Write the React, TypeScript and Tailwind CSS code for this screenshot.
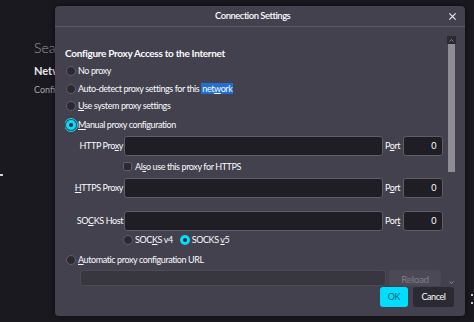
import React from 'react';

const Radio = ({ checked = false, focus = false }: { checked?: boolean; focus?: boolean }) => {
  if (!checked) {
    return <span className="block h-[10px] w-[10px] shrink-0 rounded-full border border-[#5f5e69] bg-[#2b2a33]" />;
  }
  const dot = (
    <span className="flex h-[10px] w-[10px] shrink-0 items-center justify-center rounded-full bg-[#00ddff]">
      <span className="h-[4px] w-[4px] rounded-full bg-[#2b2a33]" />
    </span>
  );
  if (!focus) return dot;
  return (
    <span className="-mx-[2px] flex h-[14px] w-[14px] shrink-0 items-center justify-center rounded-full border border-[#00ddff]">
      {dot}
    </span>
  );
};

const Input = ({ className = '', value }: { className?: string; value?: string }) => (
  <div
    className={`flex h-full items-center justify-end rounded-[3px] border border-[#5e5d68] bg-[#1f1e25] pr-[6px] text-[#fbfbfe] ${className}`}
  >
    {value}
  </div>
);

const ProxyRow = ({ label, port, className = '' }: { label: React.ReactNode; port: React.ReactNode; className?: string }) => (
  <div className={`flex h-[20px] items-center ${className}`}>
    <span className="w-[58px] text-right">{label}</span>
    <Input className="ml-[1px] w-[259px]" />
    <span className="ml-[2px] w-[16px]">{port}</span>
    <Input className="ml-[2px] w-[40px]" value="0" />
  </div>
);

export default function App() {
  return (
    <div className="relative h-[322px] w-[474px] overflow-hidden bg-[#1a1920] font-['Lato',sans-serif] text-[9px] leading-[12px] tracking-[-0.4px] text-[#fbfbfe]">
      {/* page behind the modal, clipped where the dialog covers it */}
      <div className="ml-[34px] flex w-[21px] flex-col overflow-hidden whitespace-nowrap pt-[38px] tracking-normal">
        <div className="h-[20px] text-[14px] font-light leading-[20px] text-[#9e9da7]">Search</div>
        <div className="mt-[6px] text-[11px] font-bold leading-[14px] text-[#e8e8ee]">Network</div>
        <div className="mt-[6px] text-[9px] text-[#a6a5ae]">Configure</div>
      </div>
      <div className="absolute left-0 top-[174px] h-[2px] w-[3px] bg-[#d0d0d6]" />
      <div className="absolute right-[1px] top-[294px] flex flex-col gap-[6px]">
        <span className="h-[2px] w-[2px] bg-[#c8c8ce]" />
        <span className="h-[2px] w-[2px] bg-[#c8c8ce]" />
      </div>

      {/* dialog */}
      <div className="absolute left-[55px] top-[6px] flex h-[310px] w-[410px] flex-col rounded-[4px] bg-[#42414d] shadow-[0_0_6px_rgba(0,0,0,0.6)]">
        <div className="flex h-[21px] shrink-0 items-center justify-between border-b border-[#5c5b67] pl-[160px] pr-[8px]">
          <span className="text-[9.5px] font-semibold tracking-[-0.5px]">Connection Settings</span>
          <svg width="9" height="9" viewBox="0 0 10 10" className="text-[#e8e8ee]">
            <path d="M1.5 1.5 8.5 8.5M8.5 1.5 1.5 8.5" stroke="currentColor" strokeWidth="1.3" />
          </svg>
        </div>

        <div className="box-content flex h-[250px] shrink-0 pl-[10px] pr-[9px] pt-[9px]">
          <div className="flex min-w-0 flex-1 flex-col overflow-hidden">
            <div className="mt-[11px] h-[12px] text-[10px] font-bold leading-[12px] tracking-[-0.3px]">
              Configure Proxy Access to the Internet
            </div>
            <div className="mt-[3px] flex h-[18px] items-center pl-[1px]">
              <Radio />
              <span className="ml-[2px]">No proxy</span>
            </div>
            <div className="flex h-[18px] items-center pl-[1px]">
              <Radio />
              <span className="ml-[2px]">
                Auto-detect proxy settings for this{' '}
                <span className="bg-[#1f6fd6] px-[1px]">
                  net<u>w</u>ork
                </span>
              </span>
            </div>
            <div className="flex h-[18px] items-center pl-[1px]">
              <Radio />
              <span className="ml-[2px]">
                <u>U</u>se system proxy settings
              </span>
            </div>
            <div className="flex h-[20px] items-center pl-[1px]">
              <Radio checked focus />
              <span className="ml-[2px]">
                <u>M</u>anual proxy configuration
              </span>
            </div>

            <ProxyRow
              className="mt-[1px]"
              label={
                <>
                  HTTP Pro<u>x</u>y
                </>
              }
              port={
                <>
                  P<u>o</u>rt
                </>
              }
            />
            <div className="flex h-[23px] items-center pl-[58px]">
              <span className="h-[9px] w-[9px] rounded-[2px] border border-[#5f5e69] bg-[#2b2a33]" />
              <span className="ml-[3px]">
                Al<u>s</u>o use this proxy for HTTPS
              </span>
            </div>
            <ProxyRow
              label={
                <>
                  <u>H</u>TTPS Proxy
                </>
              }
              port={
                <>
                  P<u>o</u>rt
                </>
              }
            />
            <ProxyRow
              className="mt-[13px]"
              label={
                <>
                  SO<u>C</u>KS Host
                </>
              }
              port={
                <>
                  Por<u>t</u>
                </>
              }
            />
            <div className="flex h-[20px] items-center pl-[58px]">
              <Radio />
              <span className="ml-[2px]">
                SOC<u>K</u>S v4
              </span>
              <span className="ml-[7px]">
                <Radio checked />
              </span>
              <span className="ml-[2px]">
                SOCKS <u>v</u>5
              </span>
            </div>
            <div className="flex h-[20px] items-center pl-[1px]">
              <Radio />
              <span className="ml-[2px]">
                <u>A</u>utomatic proxy configuration URL
              </span>
            </div>
            <div className="flex h-[16px] shrink-0 items-stretch">
              <div className="ml-[15px] w-[306px] rounded-[3px] border border-[#4b4a55] bg-[#38373f]" />
              <div className="ml-[3px] flex w-[52px] items-end justify-center rounded-[3px] bg-[#4a4955] text-[10px] leading-[13px] text-[#7f7e89]">
                Reload
              </div>
            </div>
          </div>

          {/* scrollbar */}
          <div className="flex w-[9px] flex-col items-center">
            <div className="flex h-[8px] w-[9px] items-center justify-center bg-[#2b2a33]">
              <svg width="5" height="3" viewBox="0 0 5 3">
                <path d="M0.5 2.5 2.5 0.5 4.5 2.5" stroke="#9e9da7" strokeWidth="0.8" fill="none" />
              </svg>
            </div>
            <div className="h-[128px] w-[7px] bg-[#8e8d96]" />
            <div className="flex-1" />
            <div className="flex h-[8px] w-[9px] items-center justify-center">
              <svg width="5" height="3" viewBox="0 0 5 3">
                <path d="M0.5 0.5 2.5 2.5 4.5 0.5" stroke="#9e9da7" strokeWidth="0.8" fill="none" />
              </svg>
            </div>
          </div>
        </div>

        <div className="mr-[11px] mt-[1px] flex h-[20px] shrink-0 justify-end gap-[5px]">
          <button className="w-[28px] rounded-[3px] bg-[#00ddff] text-[9px] text-[#1d6270]">OK</button>
          <button className="w-[41px] rounded-[3px] bg-[#2b2a33] text-[9px] text-[#fbfbfe]">Cancel</button>
        </div>
      </div>
    </div>
  );
}
